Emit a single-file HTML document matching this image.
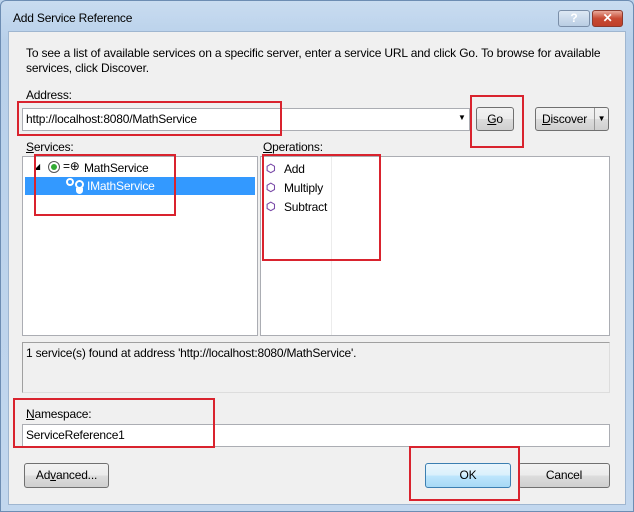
<!DOCTYPE html><html><head><style>
*{margin:0;padding:0;box-sizing:border-box}
body{width:634px;height:512px;background:#bcd3ec;font-family:"Liberation Sans",sans-serif;font-size:12px;color:#000;position:relative;overflow:hidden;letter-spacing:-0.2px}
.a{position:absolute;white-space:nowrap}
.frame{left:0;top:0;width:634px;height:512px;background:linear-gradient(#c9dcf0,#b8d0ea 40px,#c2d7ee);border:1px solid #6d8db3;border-radius:6px 6px 0 0}
.content{left:8px;top:31px;width:618px;height:474px;background:#f0f0f0;border:1px solid #9fb6d0}
.btn{border:1px solid #707070;border-radius:3px;background:linear-gradient(#f2f2f2,#ebebeb 50%,#dddddd 50%,#cfcfcf);text-align:center;line-height:22px}
.box{background:#fff;border:1px solid #abadb3}
.red{border:2px solid #d9232e}
u{text-decoration:underline}
.op{color:#7a4aa8;font-size:11px;font-weight:bold}
</style></head><body>
<div class="a frame"></div>
<div class="a" style="left:13px;top:11px;font-size:12px">Add Service Reference</div>
<div class="a" style="left:558px;top:10px;width:32px;height:17px;border:1px solid #7a8ea8;border-radius:3px;background:linear-gradient(#dde8f4,#b9cde3);text-align:center;font-size:12px;color:#fff;line-height:15px;font-weight:bold">?</div>
<div class="a" style="left:592px;top:10px;width:31px;height:17px;border:1px solid #8b3a2e;border-radius:3px;background:linear-gradient(#e9a99a,#c74a33 50%,#c0402a);text-align:center;font-size:12px;color:#fff;line-height:15px;font-weight:bold">✕</div>
<div class="a content"></div>
<div class="a" style="left:26px;top:46px;line-height:15px;font-size:12px;letter-spacing:-0.15px">To see a list of available services on a specific server, enter a service URL and click Go. To browse for available<br>services, click Discover.</div>
<div class="a" style="left:26px;top:88px">Address:</div>
<div class="a box" style="left:22px;top:108px;width:448px;height:23px"></div>
<div class="a" style="left:26px;top:112px">http://localhost:8080/MathService</div>
<div class="a" style="left:458px;top:113px;font-size:8px">▼</div>
<div class="a btn" style="left:476px;top:107px;width:38px;height:24px"><u>G</u>o</div>
<div class="a btn" style="left:535px;top:107px;width:74px;height:24px;text-align:left;padding-left:6px"><u>D</u>iscover<span style="position:absolute;left:58px;top:0;height:22px;border-left:1px solid #999;width:14px;text-align:center;font-size:8px">▼</span></div>
<div class="a" style="left:26px;top:140px"><u>S</u>ervices:</div>
<div class="a" style="left:263px;top:140px"><u>O</u>perations:</div>
<div class="a box" style="left:22px;top:156px;width:236px;height:180px"></div>
<div class="a box" style="left:260px;top:156px;width:350px;height:180px"></div>
<div class="a" style="left:331px;top:157px;width:1px;height:178px;background:#ececec"></div>
<div class="a" style="left:34px;top:162px;font-size:8px">◢</div>
<div class="a" style="left:48px;top:161px;width:12px;height:12px;border:1px solid #555;border-radius:50%;background:#fff"><div style="margin:2px;width:6px;height:6px;border-radius:50%;background:#3a3"></div></div>
<div class="a" style="left:63px;top:159px;font-size:12px">=⊕</div>
<div class="a" style="left:84px;top:161px">MathService</div>
<div class="a" style="left:25px;top:177px;width:230px;height:18px;background:#3399ff"></div>
<div class="a" style="left:66px;top:178px;width:8px;height:8px;border:2px solid #fff;border-radius:50%"></div>
<div class="a" style="left:75px;top:180px;width:9px;height:9px;border:2px solid #fff;border-radius:50%"></div>
<div class="a" style="left:76px;top:188px;width:7px;height:6px;background:#fff;border-radius:0 0 4px 4px"></div>
<div class="a" style="left:87px;top:179px;color:#fff">IMathService</div>
<div class="a op" style="left:266px;top:162px">⬡</div>
<div class="a" style="left:284px;top:162px">Add</div>
<div class="a op" style="left:266px;top:181px">⬡</div>
<div class="a" style="left:284px;top:181px">Multiply</div>
<div class="a op" style="left:266px;top:200px">⬡</div>
<div class="a" style="left:284px;top:200px">Subtract</div>
<div class="a" style="left:22px;top:342px;width:588px;height:51px;border:1px solid #a0a0a0;border-right-color:#ddd;border-bottom-color:#ddd;background:#f0f0f0"></div>
<div class="a" style="left:26px;top:346px">1 service(s) found at address 'http://localhost:8080/MathService'.</div>
<div class="a" style="left:26px;top:407px"><u>N</u>amespace:</div>
<div class="a box" style="left:22px;top:424px;width:588px;height:23px"></div>
<div class="a" style="left:26px;top:428px">ServiceReference1</div>
<div class="a btn" style="left:24px;top:463px;width:85px;height:25px">Ad<u>v</u>anced...</div>
<div class="a btn" style="left:425px;top:463px;width:86px;height:25px;border-color:#3c7fb1;background:linear-gradient(#eaf6fd,#d9f0fc 50%,#bee6fd 50%,#a7d9f5)">OK</div>
<div class="a btn" style="left:518px;top:463px;width:92px;height:25px">Cancel</div>
<div class="a red" style="left:17px;top:101px;width:265px;height:35px"></div>
<div class="a red" style="left:470px;top:95px;width:54px;height:53px"></div>
<div class="a red" style="left:34px;top:154px;width:142px;height:62px"></div>
<div class="a red" style="left:262px;top:154px;width:119px;height:107px"></div>
<div class="a red" style="left:13px;top:398px;width:202px;height:50px"></div>
<div class="a red" style="left:409px;top:446px;width:111px;height:55px"></div>
</body></html>
